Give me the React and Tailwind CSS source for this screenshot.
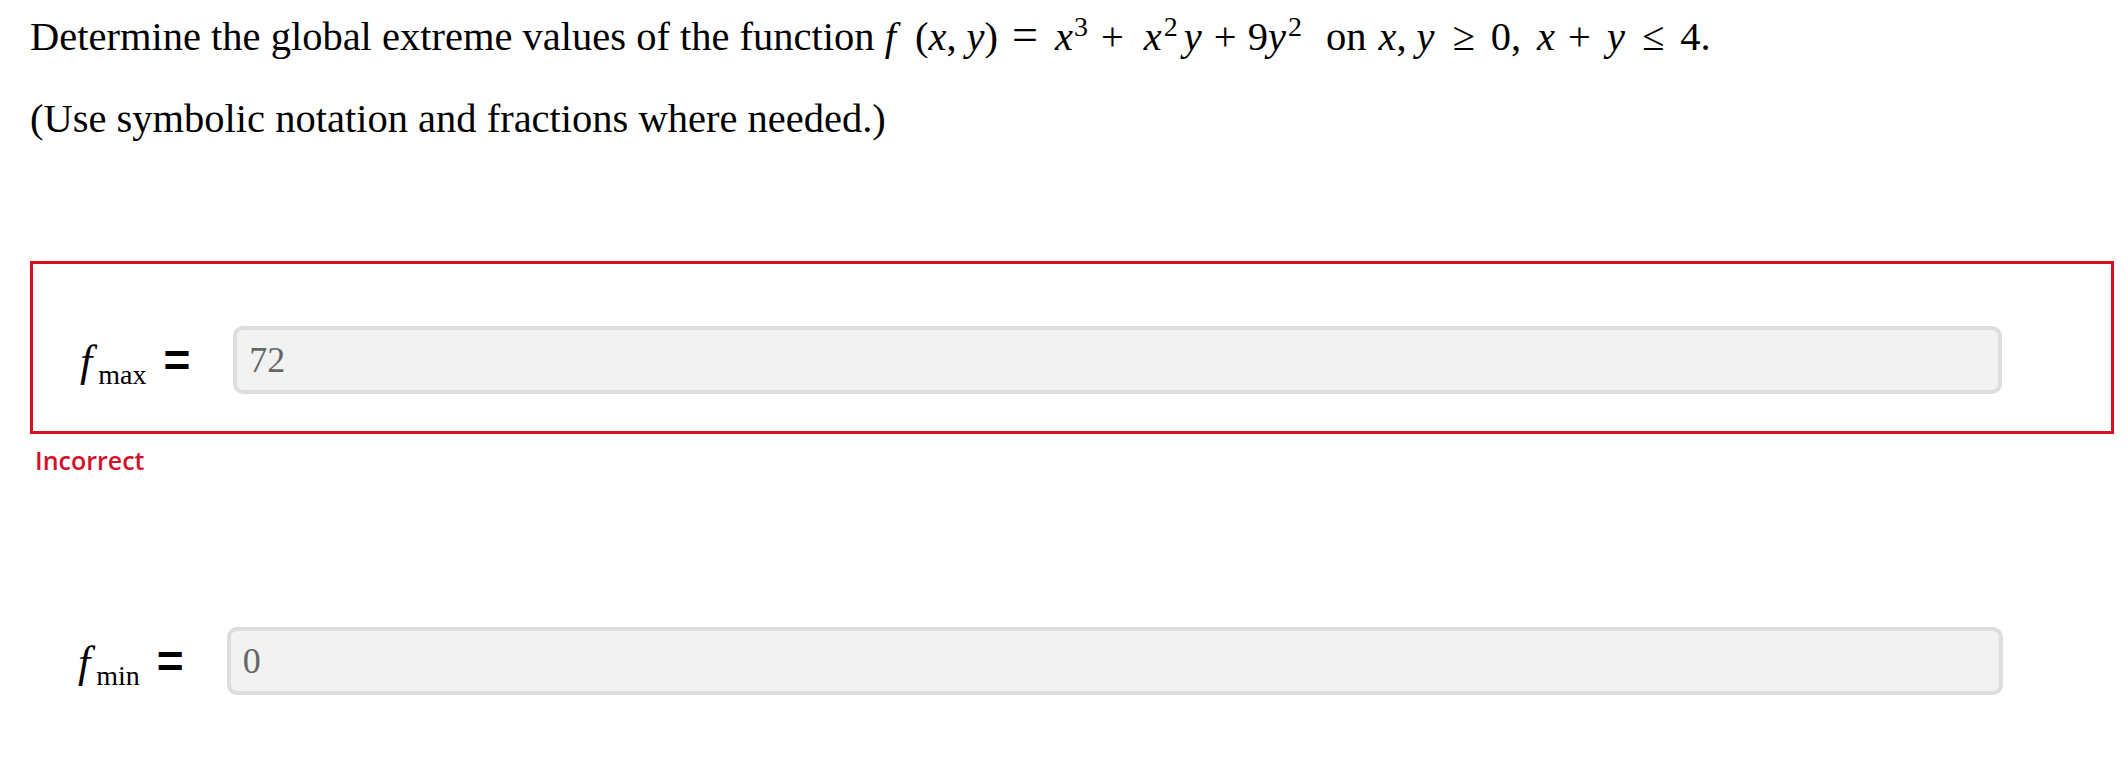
import React from "react";

function Label({ sub }) {
    return (
        <div className="flex items-baseline shrink-0 leading-none">
            <span className="italic text-[44px]">f</span>
            <span className="text-[28px] ml-[6px] relative top-[8px]">{sub}</span>
            <span className="ml-[17px] font-['Liberation_Sans',sans-serif] font-bold text-[46px]">=</span>
        </div>
    );
}

function AnswerBox({ value }) {
    return (
        <input
            readOnly
            value={value}
            className="flex-1 h-[68px] border-[4px] border-[#dddddd] rounded-[10px] bg-[#f2f2f2] px-[12px] text-[36px] text-[#666666] outline-none font-['Liberation_Serif',serif]"
        />
    );
}

export default function App() {
    return (
        <div className="min-h-screen bg-white text-black font-['Liberation_Serif',serif] text-[40.5px] pl-[30px] pr-[14px] pt-[5px]">
            <p className="leading-[60px] whitespace-nowrap">
                Determine the global extreme values of the function{" "}
                <span className="italic">f</span>
                <span className="ml-[19px]">(</span>
                <span className="italic">x</span>,
                <span className="italic ml-[10px]">y</span>
                <span>)</span>
                <span className="ml-[14px] text-[46px]">=</span>
                <span className="italic ml-[17px]">x</span>
                <sup className="text-[28px] leading-none ml-[1px]">3</sup>
                <span className="ml-[13px]">+</span>
                <span className="italic ml-[20px]">x</span>
                <sup className="text-[28px] leading-none ml-[2px]">2</sup>
                <span className="italic ml-[6px]">y</span>
                <span className="ml-[12px]">+</span>
                <span className="ml-[11px]">9</span>
                <span className="italic">y</span>
                <sup className="text-[28px] leading-none ml-[2px]">2</sup>
                <span className="ml-[24px]">on</span>
                <span className="italic ml-[12px]">x</span>,
                <span className="italic ml-[10px]">y</span>
                <span className="ml-[18px]">≥</span>
                <span className="ml-[16px]">0</span>,
                <span className="italic ml-[16px]">x</span>
                <span className="ml-[13px]">+</span>
                <span className="italic ml-[16px]">y</span>
                <span className="ml-[17px]">≤</span>
                <span className="ml-[16px]">4</span>.
            </p>
            <p className="leading-[60px] mt-[22px]">(Use symbolic notation and fractions where needed.)</p>

            <div className="mt-[112px] border-[3px] border-[#d2131f] pl-[47px] pr-[109px] pt-[62px] pb-[37px]">
                <div className="flex items-center">
                    <Label sub="max" />
                    <div className="w-[43px] shrink-0" />
                    <AnswerBox value="72" />
                </div>
            </div>
            <div className="mt-[8px] ml-[5px] text-[25px] leading-[37px] text-[#d3112b] font-['Open_Sans',sans-serif] font-semibold">
                Incorrect
            </div>

            <div className="mt-[148px] flex items-center pl-[48px] pr-[111px]">
                <Label sub="min" />
                <div className="w-[43px] shrink-0" />
                <AnswerBox value="0" />
            </div>
        </div>
    );
}
